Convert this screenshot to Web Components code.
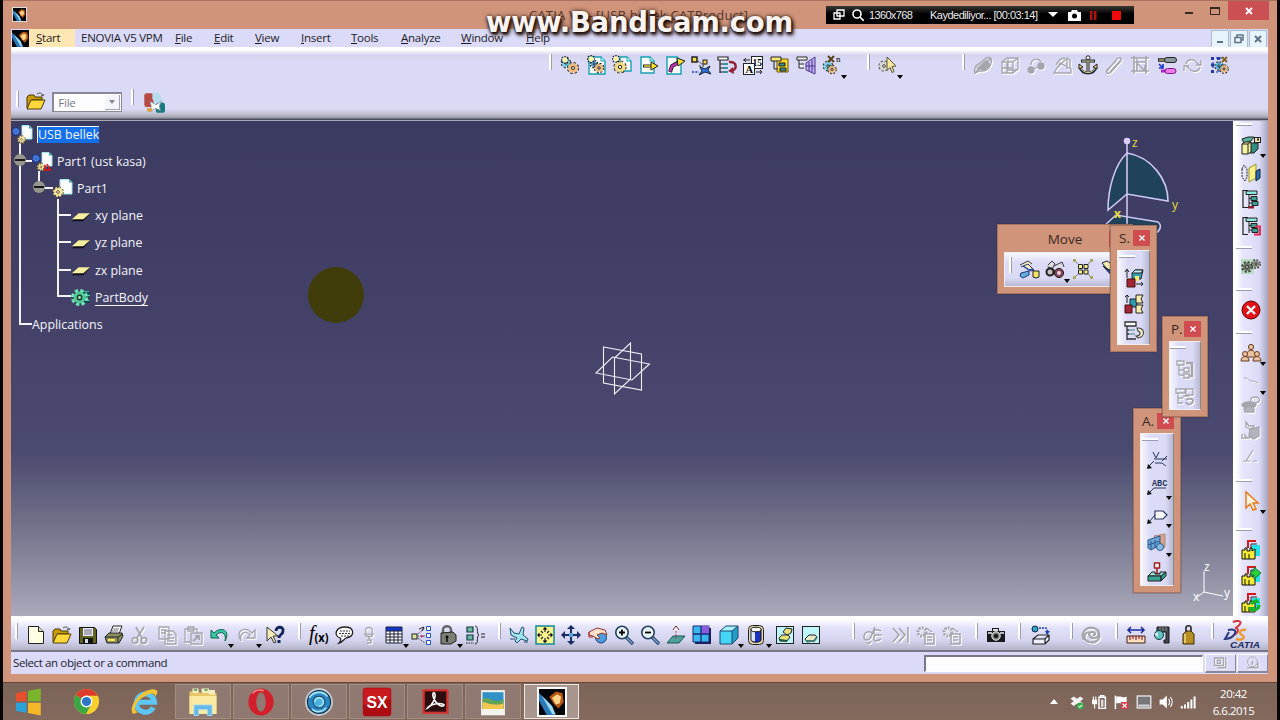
<!DOCTYPE html>
<html lang="en">
<head>
<meta charset="utf-8">
<title>CATIA V5</title>
<style>
  html, body {
    margin: 0;
    width: 1280px;
    height: 720px;
    overflow: hidden;
    background: #080604;
  }
  body {
    font: 11.5px/16px "Open Sans", "Noto Sans", sans-serif;
    color: #1c1c24;
  }
</style>
</head>
<body>
<cad-desktop></cad-desktop>

<script>
// ---------- icon artwork, all on a 20x20 grid ----------

const gear = (x, y, r, fill, line = '#2a2620') => `
  <g fill="none" stroke-dasharray="${r * 0.45} ${r * 0.335}">
    <circle cx="${x}" cy="${y}" r="${r}" stroke="${line}" stroke-width="3.600"/>
    <circle cx="${x}" cy="${y}" r="${r}" stroke="${fill}" stroke-width="1.800"/>
  </g>
  <circle cx="${x}" cy="${y}" r="${r - 0.2}" fill="${fill}"/>
  <circle cx="${x}" cy="${y}" r="${r * 0.35}" fill="#fff" stroke="${line}" stroke-width="1"/>`;
const spark = (x, y) => `<path d="M${x - 4} ${y}h8M${x} ${y - 4}v8M${x - 3} ${y - 3}l6 6M${x + 3} ${y - 3}l-6 6" stroke="#222" stroke-width="1.600" stroke-dasharray="1.200 1.200"/><circle cx="${x}" cy="${y}" r="2.400" fill="#fff6a0"/>`;
const page = (x, y, w, h) => `<path d="M${x} ${y}h${w - 4}l4 4v${h - 4}h${-w}z" fill="#fff" stroke="#14a0b0" stroke-width="1.4"/><path d="M${x + w - 4} ${y}v4h4" fill="#bff" stroke="#14a0b0"/>`;
const off = (inner) => `<g style="filter:drop-shadow(1px 1px 0 #fff)" fill="none" stroke="#a5a5ae" stroke-width="1.3">${inner}</g>`;
const treeIcon = `<path d="M7 1.500H2v17h5" stroke="#222" fill="none" stroke-width="1.200"/><path d="M5 2h11v3.500H5z" fill="#8fe4dc" stroke="#222"/><path d="M8 6v11M8 9.500h4M8 14h4" stroke="#222" fill="none"/><path d="M10 7.500h6v4h-6zM11 12.500h6v4h-6z" fill="#3b9f92" stroke="#222"/>`;
const lens = (sign) => `<path d="M12 12l7 7" stroke="#25406e" stroke-width="3.4"/><path d="M12 12l6.5 6.5" stroke="#7fa3cc" stroke-width="1.4"/><circle cx="8" cy="7.5" r="6.200" fill="#eefcff" stroke="#24405e" stroke-width="1.6"/><path d="${sign}" stroke="#000" stroke-width="1.8"/>`;
const folder = `<path d="M1 6l2-2h5l1 2h7v3H6L3 17H1z" fill="#c79a08" stroke="#4a3a05"/><path d="M1 18l4-9h14l-4 9z" fill="#ffd93c" stroke="#4a3a05"/><path d="M11 3c3-2 5-1 6 2l1-2m-1 2l-2-1" fill="none" stroke="#555"/>`;
const scene = (inner) => `<rect x="1.5" y="1.5" width="17" height="17" fill="#bff6fa" stroke="#222"/>${inner}`;
const blockTree = (arrow) => `<path d="M7 8V1h8" fill="none" stroke="#d81818" stroke-width="2"/><path d="M11 5h8v11h-8z" fill="#25dfe6"/><path d="M10 10V4h6" fill="none" stroke="#223" stroke-width="1"/><path d="M1 10h3V8h2v3h3V8h2v3l3-2v10H1z" fill="#f5ec35" stroke="#111"/><path d="M4 13v6M8 14v5" stroke="#111"/>${arrow}`;
const assy = `${gear(4, 6.500, 2.600, '#4d8bf0', '#0b2f9c')}<path d="M10 .5h7l3 3V14H10z" fill="#fff" stroke="#9be5e8"/><path d="M17 .5v3h3" fill="#35a9ad"/>`;

const ICONS = {
  space: `<rect width="20" height="20" fill="#05060c"/><path d="M0 3l9 9 3 8H6L0 9z" fill="#2b79b8"/><path d="M2 5l8 8 3 7-3-1-4-7z" fill="#9bdcf2"/><path d="M8 6l5-4 5 1 1 7-4 5-4-4z" fill="#b8590e"/><path d="M10 7l4-3 3 2-1 5-3 1z" fill="#ffd48a"/>`,
  gears: `${gear(6, 8, 3.500, '#6cd5ee')}${gear(13, 13, 4.300, '#f2bc7c')}${spark(5, 5)}`,
  product: `${page(3, 2, 16, 17)}${gear(8, 9, 2.600, '#50a8e0')}${gear(13, 13, 3.500, '#f2bc7c')}${spark(5, 4)}`,
  part: `${page(8, 2, 11, 14)}${gear(8, 12, 4.800, '#f6dc80')}${spark(4, 4)}`,
  insert: `${page(2, 2, 13, 16)}<path d="M4 11h9" stroke="#222" stroke-width="3"/><path d="M5 11h8" stroke="#f6e332" stroke-width="1.400"/><path d="M12 7l7 4-7 4z" fill="#f6e332" stroke="#222"/>`,
  insertPos: `${page(2, 2, 14, 17)}<path d="M5 17l2-6 7-4" stroke="#222" stroke-width="4" fill="none"/><path d="M5 16.500l2-5.500 6-3" stroke="#c22bb5" stroke-width="2.400" fill="none"/><path d="M12 3l8 3-7 5z" fill="#f6e332" stroke="#222"/>`,
  replace: `<rect x="1" y="2" width="5" height="5" fill="#f6dc50" stroke="#222" stroke-width="1.500"/><path d="M7 6l5 4m-4 1h5V7" stroke="#333" fill="none" stroke-dasharray="2 1"/><rect x="12" y="5" width="4" height="4" fill="#f3cd45" stroke="#222"/><path d="M9 12l5 2 5-3-2 4 3 4-6-2-6 3 3-4z" fill="#2f74dc" stroke="#123"/><path d="M1 17h7" stroke="#1838c0" stroke-width="1.600" stroke-dasharray="2 1.300"/>`,
  reorder: `<path d="M1 2h10v3H1zM3 5v13M3 9h4M3 13h4M3 17h4" fill="#fff" stroke="#222" stroke-width="1.200"/><path d="M6 8h5v2H6zM6 12h5v2H6zM6 16h5v2H6z" fill="#35979c"/><path d="M12 7c8-1 9 8 2 9" fill="none" stroke="#912434" stroke-width="2.500"/><path d="M16 12l-5 4 6 3z" fill="#912434"/>`,
  numbering: `<rect x="8.500" y="1.500" width="11" height="12" fill="#fff" stroke="#222"/><text x="9.500" y="11" font-size="9.500" font-weight="bold" font-family="Liberation Serif, serif">15</text><rect x=".5" y="8.500" width="11" height="11" fill="#fff" stroke="#222"/><text x="2.500" y="17.500" font-size="10.500" font-weight="bold" font-family="Liberation Serif, serif">A</text><path d="M0 5h7M3 3L1 5l2 2M13 17h6m-2-2l2 2-2 2" fill="none" stroke="#222"/>`,
  symmetry: `<path d="M7 4h11v13H7z" fill="#f8d828" stroke="#6c5610"/><path d="M1 2h10v4H1z" fill="#f6e97a" stroke="#222"/><path d="M4 6v8h4" stroke="#222" fill="none"/><path d="M9 8h6v3H9zM10 13h6v3h-6z" fill="#39918d" stroke="#222"/>`,
  load: `<path d="M1 2h10v3H1zM3 5v8h5M3 9h5" fill="#fff" stroke="#222"/><path d="M19 2v17l-9-4V8z" fill="#c4b2ee" stroke="#46328c"/><path d="M13 7v9M16 5v12M10 11h9" stroke="#46328c"/>`,
  multi: `${gear(6, 11, 3.500, '#6cd5ee')}${gear(10, 14.500, 3, '#f2bc7c')}<path d="M6 1l6 6M12 1l-6 6" stroke="#54441c" stroke-width="2"/><text x="14" y="7" font-size="9" font-family="Liberation Serif, serif">n</text>`,
  select: `${gear(6, 11, 3.800, '#d8d8d0', '#444')}<path d="M9 2l9 9-4 .5 2 5-2 1-2-5-3 3z" fill="#f6e6a0" stroke="#553"/>`,
  coincide: off('<path d="M2 18c-2-5 1-8 5-10l6-5c4-2 7 1 5 5-1 6-6 9-11 8z" fill="#d4d4de"/><path d="M5 13l8-7 4 4-6 5z" fill="#a5a5ae"/><path d="M1 19L18 3"/>'),
  contact: off('<path d="M2 7h11v11H2zM2 7l5-4h11v11l-5 4M13 7l5-4M8 4v11h10M7 8v10M2 13h11"/>'),
  offset: off('<circle cx="5" cy="15" r="3" fill="#a5a5ae"/><circle cx="15" cy="11" r="3" fill="#a5a5ae"/><path d="M5 10c0-6 7-8 10-3M5 15l10-4"/>'),
  angle: off('<path d="M2 18h17v-4L8 8zM5 13L15 3v11M15 3l3 2v9M4 10c2-4 5-7 9-7"/>'),
  anchor: `<path d="M10 5v13M3 6h14M2 12c1 4 4 6 8 6s7-2 8-6" fill="none" stroke="#1d2e48" stroke-width="3"/><path d="M10 6v11M4 6h12M3 13c1 3 4 4.500 7 4.500s6-1.500 7-4.500" fill="none" stroke="#e6d07a" stroke-width="1"/><circle cx="10" cy="2.800" r="2" fill="#fff" stroke="#222"/><path d="M1 14V9l4 3zM19 14V9l-4 3z" fill="#e6d07a" stroke="#222"/>`,
  clip: off('<path d="M3 16L13 4c3-3 6 0 3 3L7 17c-3 3-6 0-4-2L12 6M6 17L17 5"/>'),
  quick: off('<path d="M1 3h18M4 1v18M16 1v18M1 16h18M5 7h10M7 4v12M7 8l8 8M15 10v6h-5" stroke-width="1.600"/>'),
  flexible: `<path d="M1 5h7" stroke="#222" stroke-width="3.500"/><path d="M2 5h6" stroke="#d8c880" stroke-width="1.200"/><rect x="7.500" y="2.500" width="12" height="5" rx="2.500" fill="#8a9aa0" stroke="#222"/><path d="M2 9l4 4m0-4v4H2" stroke="#1830d0" stroke-width="1.600" fill="none"/><path d="M4 16h5" stroke="#b224c8" stroke-width="3"/><rect x="8" y="13.500" width="11" height="5" rx="2.500" fill="#ee7ae8" stroke="#7a1690"/>`,
  change: off('<path d="M3 9c1-5 8-6 11-1l3 2M17 12c-1 5-8 6-11 1l-3-2M18 5v5h-5M1 16v-5h5"/>'),
  pattern: `<path d="M3 3h10M3 10h8M3 17h8M4 3v14M10 3v14" stroke="#1730a0" stroke-dasharray="2 2"/><path d="M2 2h3v3H2zM8 2h3v3H8zM2 8.500h3v3H2zM2 15h3v3H2z" fill="#2038a8"/>${gear(10, 11, 3, '#49b8ea')}${gear(15, 14, 3, '#f4c48c')}<path d="M13 2l5 5M18 2l-5 5" stroke="#816626" stroke-width="2"/>`,
  folder,
  mailObj: `<rect x="2" y="2" width="8" height="12" rx="2" fill="#b64a42"/><rect x="12" y="10" width="8" height="9" rx="2.500" fill="#187a80"/><path d="M9 1l6 1 3 7-6 2-3-4z" fill="#b4dcec"/><path d="M7 9l5 3 5-3-2 4 1 4-4-2-5 3 1-5z" fill="#fff" stroke="#8890a0" stroke-width=".7"/><path d="M4 15h5l-1 3H5z" fill="#d9a23a"/>`,
  newDoc: `<path d="M2.500 1.500h10l5 5v12h-15z" fill="#ffffe4" stroke="#222"/><path d="M12.500 1.500v5h5" fill="#dcdcb8" stroke="#222"/>`,
  save: `<path d="M1.500 2.500h15l2 2v14h-17z" fill="#606420" stroke="#111"/><path d="M5 3h10v8H5z" fill="#eef"/><path d="M6 5h8M6 7h8M6 9h8" stroke="#667"/><path d="M5 13h10v5H5z" fill="#111"/><path d="M7 14h3v4H7z" fill="#ddd"/>`,
  print: `<path d="M6 9l3-8h9l-3 8z" fill="#fff" stroke="#222"/><path d="M9 4h6M8 6h6" stroke="#777"/><path d="M1 12l4-4h13l1 3-4 7H3z" fill="#8c8f60" stroke="#222"/><path d="M1 12h13l5-3M14 12v6" stroke="#222" fill="none"/><path d="M4 15h7" stroke="#ffe94d" stroke-width="2"/>`,
  cut: off('<path d="M6 2l6 11M14 2L7 13" stroke-width="1.800"/><circle cx="5" cy="15.500" r="2.800" stroke-width="1.800"/><circle cx="14" cy="15.500" r="2.800" stroke-width="1.800"/>'),
  copy: off('<path d="M2 2h10v12H2zM4 5h5M4 8h5M8 6h8l3 3v10H8zM10 10h5M10 13h7M10 16h7"/>'),
  paste: off('<path d="M2 4h12v13H2zM5 2h6v4H5z"/><path d="M8 8h11v11H8z" fill="#dad9f0"/><path d="M10 16l6-5m-4 0h4v4" stroke-width="1.800"/>'),
  undo: `<path d="M2 5v8h8L7 10c5-5 11-2 9 6 6-11-4-15-11-8z" fill="#36c9a5" stroke="#126048"/>`,
  redo: off('<path d="M18 5v8h-8l3-3C8 5 2 8 4 16-2 5 8 1 15 8z"/>'),
  whats: `<path d="M2 2v14l4-4 3 6 2-1-3-6h5z" fill="#f7ebb6" stroke="#333"/><path d="M11 6c0-5 8-5 7 0 0 4-4 3-4 7" fill="none" stroke="#12265c" stroke-width="2.800"/><rect x="12.500" y="15" width="3" height="3" fill="#12265c"/>`,
  formula: `<text x="1" y="15" font-size="20" font-style="italic" font-family="Liberation Serif, serif">f</text><text x="6.500" y="17" font-size="11.500" font-weight="bold" font-family="Open Sans, sans-serif" textLength="14" lengthAdjust="spacingAndGlyphs">(x)</text>`,
  comment: `<path d="M5 13C-2 10 1 2 10 2s11 9 1 11c-2 1-3 4-7 5 2-2 2-4 1-5z" fill="#fff" stroke="#222" stroke-width="1.300"/><path d="M5 6h10M4 8.500h11M6 11h8" stroke="#333" stroke-dasharray="2 1"/>`,
  knowledge: off('<circle cx="10" cy="6" r="3.500"/><path d="M6 8c0 5 8 5 8 0M10 12v2M8 15h4v3H8" stroke-width="1.600"/>'),
  table: `<path d="M2 2h16v16H2z" fill="#fff"/><path d="M2 2h16v4H2z" fill="#1236c8"/><path d="M2 2h16v16H2zM2 6h16M2 9h16M2 12h16M2 15h16M6 6v12M10 6v12M14 6v12" fill="none" stroke="#182038"/>`,
  links: `<rect x="0" y="9" width="5" height="5" fill="#dce59c" stroke="#222"/><path d="M5 11h8M6 9l7-6M6 13l7 5" stroke="#555" stroke-dasharray="2 1"/><path d="M7 4l5-2-2 4" fill="none" stroke="#222"/><path d="M14.500 1.500h4v4h-4zM14.500 8.500h4v4h-4zM14.500 15.500h4v4h-4z" fill="#fff" stroke="#1f55bd"/><path d="M9 10l3 1-3 2" fill="#d2257b"/>`,
  lock: `<path d="M5 9V5c0-5 8-5 8 0v4" fill="none" stroke="#666" stroke-width="2.600"/><path d="M3 8l12-1 3 3v6l-5 3H3z" fill="#7c8074" stroke="#222"/><circle cx="9" cy="12" r="1.500"/><path d="M9 12v5" stroke="#111" stroke-width="1.600"/>`,
  equiv: `<path d="M2 2h6v5H2zM2 10h6v5H2z" fill="#62bf9e" stroke="#234" stroke-width="1.200"/><path d="M1 18h8" stroke="#222" stroke-dasharray="1.500 1"/><path d="M10 1c4 0 1 8 4 9-3 1 0 9-4 9M16 9h4M16 12h4" fill="none" stroke="#222"/>`,
  fly: `<path d="M1 3l4 5 5 1 3-7 2 1-1 7 5 4-1 2-6-2-4 4-2-2 2-3-6-3z" fill="#9fe4f0" stroke="#22506e"/><path d="M1 14h5M15 17h4" stroke="#22506e"/>`,
  fit: `<rect x="1" y="1" width="18" height="18" fill="#faf58d" stroke="#1d8f98" stroke-width="1.600"/><path d="M6 6l2 2M14 6l-2 2M6 14l2-2M14 14l-2-2M10 4v3M10 13v3M4 10h3M13 10h3" stroke="#222" stroke-width="1.200"/><path d="M10 2l2.500 2.500h-5zM10 18l2.500-2.500h-5zM2 10l2.500-2.500v5zM18 10l-2.500-2.500v5z"/>`,
  pan: `<path d="M10 3v14M3 10h14" stroke="#1b2d66" stroke-width="2"/><path d="M10 0l4 4H6zM10 20l4-4H6zM0 10l4-4v8zM20 10l-4-4v8z" fill="#1b2d66"/><rect x="8" y="8" width="4" height="4" fill="#59a4dd"/>`,
  rotate: `<circle cx="13" cy="12.500" r="5.500" fill="#4d9ee0" stroke="#223e72"/><path d="M1 7l8-4 8 2 2 5-5-2-5 2 3 3-2 1-5-3-4-1z" fill="#ffe0cc" stroke="#84382e"/><path d="M1 7v5h4" stroke="#a22" fill="none"/>`,
  zoomIn: lens('M5 7.500h6M8 4.500v6'),
  zoomOut: lens('M5 7.500h6'),
  normal: `<path d="M1 18l6-7h12l-6 7z" fill="#4ca29c" stroke="#1c5450"/><path d="M10 14V4" stroke="#b04040" stroke-dasharray="2 1"/><path d="M7 5l3-4 3 4" fill="#fff" stroke="#622"/>`,
  views: `<path d="M3 3h16v16H3z" fill="#17205c"/><path d="M1 1h16v16H1z" fill="#39b8ee" stroke="#1a2878"/><path d="M9 1h8v8H9z" fill="#8b5ce0"/><path d="M9 1v16M1 9h16" stroke="#1a2878" stroke-width="1.300"/>`,
  cube: `<path d="M1 6l6-5h12l-6 5z" fill="#a8f1fa"/><path d="M1 6h12v13H1z" fill="#46d5f5"/><path d="M13 6l6-5v12l-6 6z" fill="#249cc8"/><path d="M1 6l6-5h12v12l-6 6H1zM1 6h12v13M13 6l6-5" fill="none" stroke="#1b4870"/>`,
  cyl: `<rect x="1.500" y=".5" width="15" height="19" rx="4" fill="#e2d9b0" stroke="#222"/><path d="M4 4v11c0 3 10 3 10 0V4z" fill="#1c32c0" stroke="#111"/><path d="M4.500 6h3.500v10.500l-3.500-1z" fill="#dce6ff"/><ellipse cx="9" cy="4.500" rx="5" ry="2.300" fill="#fff" stroke="#111"/>`,
  hide: scene('<path d="M4 13l3-3h6l2 2-3 4H5zM8 7l3-4 6 1-1 4-4 2z" fill="#e9e27a" stroke="#223"/><path d="M5 15l7 1" stroke="#253" stroke-width="2"/>'),
  swap: scene('<path d="M4 14l4-4h6l2 2-3 4-7 1z" fill="#e6eac8" stroke="#223"/><path d="M5 16h8l3-4" stroke="#4a7a70" fill="none" stroke-width="2"/>'),
  link1: off('<path d="M9 8c-4-3-8 0-8 4s5 4 7 0L12 2M8 16c-1 3-3 3-4 1M18 6c-6-3-9 0-6 4h7M18 14c-6 4-9 1-6-4" stroke-width="1.600"/>'),
  skip: off('<path d="M3 3l6 7-6 7M9 3l6 7-6 7M18 2v16" stroke-width="1.600"/>'),
  gearDoc: off('<circle cx="6" cy="7" r="4" stroke-width="3" stroke-dasharray="2 1"/><path d="M9 9h9v10H9zM11 12h5M11 15h5M10 3l6 4" stroke-width="1.500"/>'),
  camera: `<path d="M1 6h5V3h7v3h6v11H1z" fill="#181a20"/><path d="M7 4h5v2H7z" fill="#ddd"/><path d="M2 8h4M14 8h4" stroke="#b6bdc2" stroke-width="2"/><circle cx="10" cy="11" r="4.200" fill="#777" stroke="#fff"/><circle cx="10" cy="11" r="2" fill="#111"/>`,
  turn: `<circle cx="4" cy="4" r="3" fill="#2aa6c8" stroke="#124"/><path d="M8 3h7l2 4" fill="none" stroke="#1c3cb0" stroke-dasharray="2 1" stroke-width="1.400"/><path d="M14 6h5l-3 4z" fill="#1c3cb0"/><path d="M2 14l5-4h11v5l-4 4H2zM2 14h12l4-4M14 14v5" fill="#eef" stroke="#222" stroke-width="1.200"/>`,
  swirl: off('<path d="M3 15C-1 8 5 1 13 3c6 2 6 9 1 10-6 1-8-6-3-6s3 4 1 3M17 5c4 8-1 14-9 12-6-2-6-9 0-10" stroke-width="2.200"/>'),
  measure: `<path d="M2 5h16M5 2L2 5l3 3M15 2l3 3-3 3" fill="none" stroke="#1c2a9c" stroke-width="1.600"/><path d="M1 11h18v7H1z" fill="#fae0be" stroke="#3c1c14"/><path d="M4 11v4M7 11v3M10 11v4M13 11v3M16 11v4" stroke="#802"/>`,
  caliper: `<path d="M5 2h12v16h-5v-3h2V7H5z" fill="#444a50" stroke="#15171a"/><path d="M8 2v4M11 2v4M14 2v4" stroke="#888"/><circle cx="7" cy="10" r="4.500" fill="#61c4bc" stroke="#134"/><path d="M2 9l4-2v5z" fill="#def"/>`,
  weight: `<path d="M8 7V3c0-3 5-3 5 0v4" fill="none" stroke="#222" stroke-width="1.600"/><path d="M5 9l4-3h4l3 3v10H5z" fill="#b58f22" stroke="#3a2a04"/><path d="M7 9v9" stroke="#f2dc7c" stroke-width="1.500"/>`,
  scan: `<path d="M1 4l6-2h6l-3 4-7 2z" fill="#5bb39c" stroke="#222"/><rect x="13.500" y="2.500" width="6" height="5" fill="#f4e9b4" stroke="#222"/><path d="M16 4.500h2" stroke="#222" stroke-width="2"/><path d="M9 8h8v6l-4 4H9z" fill="#2f8d82" stroke="#222"/><path d="M1 9l3-2h6v10l-3 2H1z" fill="#f6f19c" stroke="#222"/><path d="M1 9h6v10M7 9l3-2" fill="none" stroke="#222"/>`,
  plane: `<path d="M1 6l2-4 3 4v8l-2 4-3-4z" fill="none" stroke="#222" stroke-dasharray="2 1"/><path d="M8 5l7-4v14l-7 4z" fill="#f8f08c" stroke="#9a942a"/><path d="M15 8l4-2v9l-4 3z" fill="#2b6cb4" stroke="#123"/>`,
  tree1: `${treeIcon}<path d="M7 17h6v2.500H7z" fill="#8c2030"/>`,
  tree2: `${treeIcon}<path d="M14 10.500h5v8h-6" fill="none" stroke="#e8204c" stroke-width="1.800"/>`,
  cogs: `<rect x="0" y="3" width="13" height="15" fill="#b7dcc2"/>${gear(6, 11, 4, '#66736a')}${gear(15, 8, 3, '#8a9188')}`,
  stop: `<circle cx="10" cy="10" r="9" fill="#e01218" stroke="#600"/><path d="M6 6l8 8M14 6l-8 8" stroke="#fff" stroke-width="2.400"/>`,
  people: `<g fill="#eac4a0" stroke="#6a3a1e"><path d="M5 14c0-9 10-9 10 0z"/><circle cx="10" cy="4" r="2.600"/><path d="M0 18c0-6 8-6 8 0zM12 18c0-6 8-6 8 0z"/><circle cx="4" cy="11" r="2.500"/><circle cx="16" cy="11" r="2.500"/></g>`,
  curve: off('<path d="M3 7c5-1 4 4 10 3l4 2" stroke-width="1"/>'),
  gray1: off('<ellipse cx="8" cy="10" rx="7" ry="3" fill="#a5a5ae"/><ellipse cx="14" cy="5" rx="4.500" ry="3"/><path d="M3 14l5-3 5 3v3H4z" fill="#b4b4be"/>'),
  gray2: off('<path d="M9 8l9-2v9l-5 3-5-3z" fill="#b4b4be"/><path d="M5 1l3 4h5l-3 4-5-3zM1 18v-5M1 17h7l3-3M3 13l3 4"/>'),
  gray3: off('<path d="M5 15L12 4M2 15h7M12 15h4" stroke-width="1.200"/>'),
  arrow: `<path d="M5 1v16l4-4 3 6 3-1-3-6h5z" fill="#fff6de" stroke="#e87a20" stroke-width="1.500"/>`,
  export1: blockTree(''),
  export2: blockTree('<path d="M10 5h3V1l7 6-7 6V9h-3z" fill="#30cf36" stroke="#084"/>'),
  export3: blockTree('<g fill="none" stroke="#14b42a" stroke-width="3"><path d="M10 11a5 5 0 0 1 7-2M18 12a5 5 0 0 1-8 4"/></g><path d="M15 5l4 5h-6zM8 14h6l-5 5z" fill="#14b42a"/>'),
  manip: `<path d="M1 6l8-4 4 3M2 8l7-3 6 6-3 1-5-3" fill="#f6f0c4" stroke="#334"/><path d="M4 7l6 4 4-1" fill="none" stroke="#2446b0" stroke-width="1.500"/><path d="M2 14l8-2v4l-6 3-3-2z" fill="#69aede" stroke="#13397c"/><path d="M14 12h6v6l-3 1-3-1z" fill="#f3e562" stroke="#222"/>`,
  snap: `<path d="M3 6l4-4 3 3-3 5M9 7l8-4 2 5" fill="#ddd" stroke="#334"/><path d="M2 7l6 2 5 5-5 2z" fill="#555"/><circle cx="5" cy="13" r="3.500" fill="#c8c0c8" stroke="#222" stroke-width="2"/><circle cx="14" cy="14" r="4.600" fill="#804358" stroke="#221"/><circle cx="14" cy="14" r="2" fill="#ecd3db"/>`,
  explode: `<path d="M1 1l5 5M19 1l-5 5M1 19l5-5M19 19l-5-5" stroke="#555" stroke-dasharray="2 1"/><path d="M5.500 5.500h4v4h-4zM11 5.500h4v4h-4zM5.500 11h4v4h-4zM11 11h4v4h-4z" fill="#f6f18a" stroke="#222"/><path d="M0 0h3v3H0zM17 0h3v3h-3zM0 17h3v3H0zM17 17h3v3h-3z" fill="#a8a860"/>`,
  clash: `<path d="M2 4l5-2 12 8-4 3-8-3z" fill="#f2ecae" stroke="#223"/><path d="M3 7l9 6 6-2v6l-5 1z" fill="#2c65b8" stroke="#112"/>`,
  sc1: `<path d="M3 10V2M1 4l2-3 2 3M12 16h7m-2-2l2 2-2 2" stroke="#222" fill="none"/><path d="M8 5l3-3h8l-2 9H8z" fill="#34a0b4" stroke="#222"/><path d="M8 5l3-3h8l-2 3z" fill="#c8f2f4" stroke="#222"/><path d="M11 8h4v5h-4z" fill="#f8e76a"/><path d="M3 11h8v8H3z" fill="#a32736" stroke="#411"/>`,
  sc2: `<path d="M3 9V1M1 3l2-2 2 2" stroke="#222" fill="none"/><path d="M6 5h7v8H6z" fill="#2c9db0" stroke="#222"/><path d="M1 11h7v8H1z" fill="#a32736" stroke="#411"/><path d="M12 1h7l-2 4 2 4h-7zM12 11h7l-2 4 2 4h-7z" fill="#f6edae" stroke="#222"/>`,
  sc3: `<path d="M1 1h11v4H1zM3 5v14M3 9h7M3 13h7M3 18h9" fill="#fff" stroke="#333" stroke-width="1.300"/><path d="M5 8h6v2H5zM5 12h6v2H5z" fill="#8faeb2"/><path d="M13 7c8-1 9 9 1 10l-2-2c5 0 5-4 2-5z" fill="#f2ecc8" stroke="#444" stroke-width="1.100"/>`,
  pub1: off('<path d="M2 2h7v4H2zM4 6v10M4 11h5M4 16h5M9 9h5v4H9zM9 15h5v4H9z"/><path d="M11 4h6v13h-3" stroke-width="2.500"/>'),
  pub2: off('<path d="M1 3h9v4H1zM3 7v10h5M3 12h5M11 3h7v6h-7zM8 10h6"/><path d="M11 14c5-3 9 0 6 3s-5 1-6-1" stroke-width="2"/>'),
  weld: `<path d="M6 1l3 6 3-6M7 8h13M8 12h7l4 3M15 10l5-5M7 10l-5 5" stroke="#25345c" fill="none"/><path d="M0 18l1-5 4 4z" fill="#111"/>`,
  text: `<text x="5" y="9" font-size="8.500" font-weight="bold" fill="#25345c" font-family="Liberation Mono, monospace">ABC</text><path d="M19 11H7l-5 5" stroke="#25345c" fill="none"/><path d="M0 18l1-5 4 4z" fill="#111"/>`,
  flag: `<path d="M8 6h8l4 4-4 4H8z" fill="#fff" stroke="#25345c" stroke-width="1.200"/><path d="M8 10l-6 7" stroke="#25345c"/><path d="M0 19l1-5 4 4z" fill="#111"/>`,
  view3d: `<path d="M7 3l11-2v13l-5 3z" fill="#dca18b" stroke="#a08878"/><path d="M1 7l12-4v9l-9 5-3-2z" fill="#6ea3d6" stroke="#275a90"/><path d="M4 8v9M8 7v8M1 12l12-4" stroke="#275a90"/><circle cx="13" cy="14" r="3.500" fill="#8abbe2" stroke="#275a90"/>`,
  stamp: `<path d="M7.500 1h5v5h-5z" fill="#fff" stroke="#a02020" stroke-width="1.500"/><path d="M10 6v6M7 12h6" stroke="#a02020" stroke-width="1.600"/><path d="M1 14l4-4h3v2h5v-2h6l-5 4z" fill="#9be2d4" stroke="#222"/><path d="M1 14h13v5H1zM14 14l5-4v4l-5 5z" fill="#36a296" stroke="#222"/>`,
  // specification tree
  root: `${assy}${gear(9.500, 14.500, 2.600, '#f8e9a4', '#8a7434')}`,
  instance: `${assy}${gear(9, 15, 2.600, '#f8e9a4', '#8a7434')}<path d="M13 13v5h6M15 12l3 6" stroke="#e31414" stroke-width="1.600" fill="none"/>`,
  partDoc: `<path d="M8 .5h9l3 3V15H8z" fill="#fff" stroke="#9be5e8"/><path d="M17 .5v3h3" fill="#35a9ad"/>${gear(6, 13, 4, '#f8e9a4', '#6d5d24')}`,
  datum: `<path d="M1 15L8 7h12l-7 8z" fill="#10101c"/><path d="M1 13l7-6.500h12L13 13z" fill="#f7efa0"/>`,
  body: `<path d="M13 5h7M14 9h6M13 14h6" stroke="#0c3d44" stroke-width="3"/><path d="M13 4h6M14 8h6M13 13h6" stroke="#4ad0c0" stroke-width="1.200"/><circle cx="9" cy="10" r="6.500" fill="#1f8264" stroke="#6fe3b4" stroke-width="5" stroke-dasharray="3 2.100"/><circle cx="9" cy="10" r="6" fill="#54c795"/><circle cx="9" cy="10" r="2.300" fill="#a8e8b0" stroke="#133c36" stroke-width="1.500"/>`,
  // taskbar and tray
  windows: `<path d="M2 4l7-1.200V9.500H2z" fill="#e4512a"/><path d="M10 2.600L18.500 1v8.500H10z" fill="#7bb52c"/><path d="M2 10.500h7v6.700L2 16z" fill="#2aa3d8"/><path d="M10 10.500h8.500V19L10 17.400z" fill="#f4b728"/>`,
  chrome: `<circle cx="10" cy="10" r="9.300" fill="#f8cf2c"/><path d="M10 10L2 5.200a9.300 9.300 0 0 1 16.300.6L10 5.800z" fill="#df3b2c"/><path d="M10 10L2 5.200A9.300 9.300 0 0 0 9.600 19.300l4-7z" fill="#3ca545"/><circle cx="10" cy="10" r="4.400" fill="#fff"/><circle cx="10" cy="10" r="3.400" fill="#2f76c8"/>`,
  ie: `<path d="M16 14A6.500 6.500 0 1 1 16.800 10.200H5" fill="none" stroke="#5cc6f4" stroke-width="3.600"/><path d="M1 18C-2 10 12-2 18 1.500c2 1.200 0 4-1 5C18 1 8 5 4 11c-2 3-1 6 1 6-1 1-3 2-4 1z" fill="#f2c332"/>`,
  explorer: `<path d="M1 3h6l1 1h11v14H1z" fill="#e9c766"/><path d="M3 1h4v3H3zM9 1h5v3H9zM14 2h4v3h-4z" fill="#f5edc2"/><path d="M4 2h2M11 2h2" stroke="#3a9a3a"/><path d="M1 6h18v12H1z" fill="#fae9a0"/><path d="M4 19v-7h12v7h-3v-4H7v4z" fill="#69b7e6" stroke="#9cdcf6" stroke-width=".6"/>`,
  opera: `<ellipse cx="10" cy="10" rx="9" ry="9.700" fill="#d21f2b"/><ellipse cx="10" cy="10" rx="3.400" ry="7" fill="#907970"/><path d="M4 4c2-3 6-3 8-2" stroke="#f58a8a" fill="none"/>`,
  orb: `<circle cx="10" cy="10" r="9.300" fill="#12263a" stroke="#c3ccd2" stroke-width="1.300"/><circle cx="10" cy="10" r="6.200" fill="none" stroke="#2a86c2" stroke-width="3.400"/><circle cx="10" cy="10" r="4" fill="#4cb4dc"/><path d="M7 10a3 3 0 1 1 3 3" fill="none" stroke="#b6ecfa"/><path d="M3 7c3-5 10-5 13-1M5 15c3 3 8 2 10-1" fill="none" stroke="#a7e6f8" stroke-width="1.200"/>`,
  sx: `<rect x=".5" y=".5" width="19" height="19" rx="2" fill="#ad0c12"/><path d="M1 1h18v7L1 12z" fill="#c91a20"/><text x="10" y="14" text-anchor="middle" font-size="10.500" font-weight="bold" fill="#fff" font-family="Liberation Sans, sans-serif">SX</text>`,
  acrobat: `<rect x="1" y="1.500" width="18" height="17" fill="#d3322e"/><rect x="2.600" y="3" width="14.800" height="14" fill="#2c0e10"/><path d="M4.500 14.500c3-1.500 6-7 5-10-.6-1.500-2 0-1 2.500 1.500 4 4.500 7 7 6 1.500-1-2-2-5-1.500s-5 1.500-6 3z" fill="none" stroke="#fff" stroke-width="1.100"/>`,
  photo: `<path d="M1.500 1.500h17v18h-17z" fill="#f4f4ee"/><path d="M2.500 3h15v12h-15z" fill="#2f91c6"/><path d="M2.500 8c5-3 7 4 15 0v7h-15z" fill="#64a356"/><path d="M2.500 10c5 1 8 3 15 1v4h-15z" fill="#f2c64f"/>`,
  dropbox: `<path d="M6 3l4 3 4-3 4 3-4 3 4 3-4 3-4-3-4 3-4-3 4-3-4-3z" fill="#f5f5f5"/><circle cx="14" cy="15" r="4.500" fill="#35a947"/><path d="M12 15l1.500 1.500 3-3" stroke="#fff" fill="none" stroke-width="1.300"/>`,
  battery: `<path d="M10 4h8v14h-8zM12 2h4v2h-4z" fill="none" stroke="#fff" stroke-width="1.800"/><path d="M12.500 7h3v9h-3z" fill="#ddd"/><path d="M3 3v5M6 3v5M2 8h5v4H2zM4.500 12v6" stroke="#fff" stroke-width="1.400" fill="#fff"/>`,
  action: `<path d="M3 2v17" stroke="#fff" stroke-width="1.800"/><path d="M4 3h6c2 2 5 1 7 0v9h-7c-2-1-4-1-6 0z" fill="#fff"/><path d="M10 10h9v9h-9z" fill="#d33f4c"/><path d="M12 12l5 5M17 12l-5 5" stroke="#fff" stroke-width="1.600"/>`,
  pane: `<rect x="1.500" y="2.500" width="17" height="15" fill="#77777a" stroke="#eee" stroke-width="1.600"/><path d="M3 13h14v3H3z" fill="#ccc"/>`,
  sound: `<path d="M2 7h4l5-5v16l-5-5H2z" fill="#fff"/><path d="M13 6c2 2 2 6 0 8M15.500 4c3 3 3 9 0 12" stroke="#fff" fill="none" stroke-width="1.300"/>`,
  signal: `<path d="M1 15h2.500v3H1zM5 13h2.500v5H5zM9 10h2.500v8H9zM13 7h2.500v11H13zM17 3h2.500v15H17z" fill="#fff"/>`,
  screen: off('<path d="M2 4h12v10H2zM6 7h4v4H6zM17 3v14H6" stroke-width="1.800"/>'),
  info: off('<circle cx="10" cy="9" r="6.500"/><path d="M10 8v5M10 5v1M3 17h14V9" stroke-width="2"/>'),
};

const define = (tag, html, setup) => {
  const template = document.createElement('template');
  template.innerHTML = html;
  customElements.define(tag, class extends HTMLElement {
    constructor() {
      super();
      this.attachShadow({ mode: 'open' }).appendChild(template.content.cloneNode(true));
    }

    connectedCallback() {
      if (setup) setup(this, this.shadowRoot);
    }
  });
};

// square icon, size in pixels from the size attribute
define('cad-icon', `
  <style>
    :host { display: block; flex: none; }
    svg { display: block; width: 100%; height: 100%; overflow: visible; }
  </style>
  <svg viewBox="0 0 20 20"></svg>`,
(host, root) => {
  const size = host.getAttribute('size') || 20;
  host.style.width = host.style.height = `${size}px`;
  root.querySelector('svg').innerHTML = ICONS[host.getAttribute('name')] || '';
});

// one toolbar slot, with a small triangle when it opens a flyout
define('cad-tool', `
  <style>
    :host {
      display: flex;
      flex: none;
      align-items: center;
      justify-content: center;
      position: relative;
      width: 26.2px;
      height: 26.4px;
    }
    :host([drop])::after {
      content: "";
      position: absolute;
      right: -2px;
      bottom: 0;
      border: 3px solid transparent;
      border-top: 4px solid #000;
      border-bottom: 0;
    }
  </style>
  <cad-icon></cad-icon>`,
(host, root) => {
  const icon = root.querySelector('cad-icon');
  icon.setAttribute('name', host.getAttribute('icon'));
  icon.setAttribute('size', 20);
  icon.connectedCallback();
});

define('cad-grip', `
  <style>
    :host {
      display: block;
      flex: none;
      box-sizing: border-box;
      width: 3px;
      height: 16px;
      margin: 0 5px 8px 9.5px;
      background: #fff;
      border-right: 1px solid #9c9cae;
    }
    :host([flat]) {
      width: 16px;
      height: 3px;
      margin: 7px 14px 6.3px 0;
      border-right: 0;
      border-bottom: 1px solid #9c9cae;
    }
  </style>`);

define('cad-menu', `
  <style>
    :host { display: flex; height: 18px; background: #dbdaf8; line-height: 18px; letter-spacing: -.25px; }
    cad-icon { margin: 1px 0 0 1px; }
    ::slotted(span) { box-sizing: border-box; white-space: nowrap; }
    ::slotted(.open) { background: #ffe6b2; }
    .mdi { display: flex; gap: 1px; margin-left: auto; padding: 1px 1px 0 0; }
    .mdi svg { width: 16px; height: 16px; background: #e8f4fd; border: 1px solid #a9bdd2; box-sizing: content-box; }
  </style>
  <cad-icon name="space" size="17"></cad-icon>
  <slot></slot>
  <div class="mdi">
    <svg viewBox="0 0 16 16"><path d="M5 11h6" stroke="#5d7288" stroke-width="2"/></svg>
    <svg viewBox="0 0 16 16"><path d="M6 6V4h6v5h-2M4 6.500h6v5H4z" stroke="#5d7288" stroke-width="1.500" fill="none"/></svg>
    <svg viewBox="0 0 16 16"><path d="M5 5l6 6M11 5l-6 6" stroke="#5d7288" stroke-width="2"/></svg>
  </div>`);

define('cad-recorder', `
  <style>
    :host {
      display: flex;
      flex: none;
      align-items: center;
      width: 308px;
      height: 18px;
      box-sizing: border-box;
      padding-left: 7px;
      background: linear-gradient(#3a3734, #000 45%);
      color: #eee;
      font: 11px/18px "Liberation Sans", sans-serif;
    }
    .size { flex: none; width: 61px; margin-left: 5px; letter-spacing: -.65px; }
    .state { flex: none; width: 123px; letter-spacing: -.5px; white-space: nowrap; }
    svg { flex: none; }
  </style>
  <svg width="12" height="12" viewBox="0 0 12 12" fill="none" stroke="#fff" stroke-width="1.300"><path d="M4 1h7v6H4zM1 4h6v6H1z"/></svg>
  <svg style="margin-left:7px" width="12" height="12" viewBox="0 0 12 12" fill="none" stroke="#fff" stroke-width="1.600"><circle cx="5" cy="5" r="4"/><path d="M8 8l4 4"/></svg>
  <span class="size">1360x768</span>
  <span class="state">Kaydediliyor... [00:03:14]</span>
  <svg width="80" height="14" viewBox="0 0 80 14" overflow="visible">
    <path d="M-5 4h10l-5 5z" fill="#fff"/>
    <path d="M15 4h3l1-2h5l1 2h3v9H15z" fill="#fff"/><circle cx="21.500" cy="8" r="2.500" fill="#000"/>
    <path d="M37 3h2.500v9H37zM41 3h2.500v9H41z" fill="#b01010"/>
    <rect x="59" y="3" width="9" height="9" fill="#ee0808"/>
  </svg>`);

define('cad-titlebar', `
  <style>
    :host { display: flex; position: relative; height: 29px; }
    cad-icon { margin: 6px 0 0 9px; border: 1px solid #ddd; box-sizing: border-box; }
    .title {
      position: absolute;
      left: 526px;
      top: 5px;
      font-size: 13px;
      line-height: 18px;
      letter-spacing: .2px;
      color: #54382e;
      white-space: nowrap;
    }
    .mark {
      position: absolute;
      left: 483px;
      top: 8px;
      font: bold 27.5px/26px "DejaVu Sans", sans-serif;
      letter-spacing: -.25px;
      color: #faf3f0;
      text-shadow: 1px 2px 3px #1a0c08, 0 0 4px #2a1812, 2px 3px 4px #33201a;
      white-space: nowrap;
      z-index: 2;
    }
    cad-recorder { margin: 5px 0 0 799px; }
    .min, .max { flex: none; margin-top: 11px; }
    .min { width: 8px; height: 2px; background: #352722; margin-left: 51px; }
    .max { width: 8px; height: 5px; margin: 6px 0 0 17px; border: 1px solid #352722; border-top-width: 2px; }
    .close { flex: none; width: 41px; height: 19px; margin-left: auto; margin-right: 4px; background: #ca5054; display: grid; place-items: center; }
  </style>
  <cad-icon name="space" size="15"></cad-icon>
  <span class="title">CATIA V5 - [USB bellek.CATProduct]</span>
  <span class="mark">www.Bandicam.com</span>
  <cad-recorder></cad-recorder>
  <i class="min"></i><i class="max"></i>
  <div class="close"><svg width="10" height="10"><path d="M2 2l6 6M8 2l-6 6" stroke="#fff" stroke-width="1.800"/></svg></div>`);

define('cad-topbars', `
  <style>
    :host {
      display: block;
      height: 74px;
      box-sizing: border-box;
      background: linear-gradient(#fff 0 3px, #d5d4ef 8px, #dbdaf6 14px 62px, #b9b9c8 68px, #9a9aa6 71px, #4a4c5e 72px 73px, #a6a6b4 73px);
    }
    .row { display: flex; align-items: center; height: 37px; }
    .combo {
      display: flex;
      box-sizing: border-box;
      width: 70px;
      height: 20px;
      padding-left: 4px;
      margin: 1px 0 0 3px;
      background: #fdfdff;
      border: 1px solid #888896;
      border-width: 2px 1px 1px 2px;
      color: #777784;
      line-height: 17px;
      letter-spacing: -.2px;
    }
    .combo i { width: 14px; margin: 1px 1px 1px auto; border: 1px solid #a0a0ae; border-width: 0 1px 1px 0; background: #f4f4fc; display: grid; place-items: center; }
  </style>
  <div class="row">
    <cad-grip style="margin-left:538px"></cad-grip>
    <cad-tool icon="gears"></cad-tool><cad-tool icon="product"></cad-tool><cad-tool icon="part"></cad-tool>
    <cad-tool icon="insert"></cad-tool><cad-tool icon="insertPos"></cad-tool><cad-tool icon="replace"></cad-tool>
    <cad-tool icon="reorder"></cad-tool><cad-tool icon="numbering"></cad-tool><cad-tool icon="symmetry"></cad-tool>
    <cad-tool icon="load"></cad-tool><cad-tool icon="multi" drop></cad-tool>
    <cad-grip style="margin-left:22px"></cad-grip>
    <cad-tool icon="select" drop></cad-tool>
    <cad-grip style="margin-left:61px"></cad-grip>
    <cad-tool icon="coincide"></cad-tool><cad-tool icon="contact"></cad-tool><cad-tool icon="offset"></cad-tool>
    <cad-tool icon="angle"></cad-tool><cad-tool icon="anchor"></cad-tool><cad-tool icon="clip"></cad-tool>
    <cad-tool icon="quick"></cad-tool><cad-tool icon="flexible"></cad-tool><cad-tool icon="change"></cad-tool>
    <cad-tool icon="pattern"></cad-tool>
  </div>
  <div class="row">
    <cad-grip style="margin:0 4px 8px 5px"></cad-grip>
    <cad-tool icon="folder" style="margin-top:-2px"></cad-tool>
    <div class="combo" style="margin-top:-1px">File<i><svg width="6" height="4"><path d="M0 0h6L3 4z" fill="#888"/></svg></i></div>
    <cad-grip style="margin:0 8px 12px 9px"></cad-grip>
    <cad-icon name="mailObj" size="23"></cad-icon>
  </div>`);

define('cad-tree', `
  <style>
    :host { display: block; position: relative; color: #f4f4fa; font-size: 12.4px; }
    .lines { position: absolute; left: 0; top: 0; }
    .node { display: flex; align-items: center; position: relative; height: 27.2px; }
    .node cad-icon { margin-right: 5px; }
    .picked { background: #1170ea; border: 1px solid #fff; border-width: 1px 0 0 1px; height: 16px; line-height: 16px; }
    .work { text-decoration: underline; text-underline-offset: 3px; }
  </style>
  <svg class="lines" width="80" height="220" fill="none" stroke="#f2f2f8" stroke-width="2">
    <path d="M9 22V203H21M9 40H21M28 50V66M28 67H42M47 78V175H60M47 94H60M47 121H60M47 149H60"/>
    <g stroke="none"><circle cx="9" cy="39" r="6" fill="#96968e"/><circle cx="28" cy="66" r="6" fill="#96968e"/></g>
    <path d="M4 39h10M23 66h10" stroke="#18181c"/>
  </svg>
  <div class="node" style="padding-left:1px"><cad-icon name="root"></cad-icon><span class="picked">USB bellek</span></div>
  <div class="node" style="padding-left:21px"><cad-icon name="instance"></cad-icon><span>Part1 (ust kasa)</span></div>
  <div class="node" style="padding-left:41px"><cad-icon name="partDoc"></cad-icon><span>Part1</span></div>
  <div class="node" style="padding-left:60px"><cad-icon name="datum" size="19"></cad-icon><span>xy plane</span></div>
  <div class="node" style="padding-left:60px"><cad-icon name="datum" size="19"></cad-icon><span>yz plane</span></div>
  <div class="node" style="padding-left:60px"><cad-icon name="datum" size="19"></cad-icon><span>zx plane</span></div>
  <div class="node" style="padding-left:60px"><cad-icon name="body" size="19"></cad-icon><span class="work">PartBody</span></div>
  <div class="node" style="padding-left:21px"><span>Applications</span></div>`);

// floating palette window
define('cad-palette', `
  <style>
    :host {
      display: flex;
      flex-direction: column;
      box-sizing: border-box;
      position: absolute;
      padding: 0 6px 6px;
      background: #cf947a;
      border: 1px solid #a5745f;
      box-shadow: 0 0 1px #30203a;
    }
    header { display: flex; align-items: center; justify-content: space-between; height: 29px; margin-right: -3px; padding-left: 2px; font-size: 13.5px; color: #3a2822; }
    header b { font-weight: normal; flex: 1; }
    header i { width: 17px; height: 16px; margin-right: 3px; background: #cf4c50; display: grid; place-items: center; }
    main {
      display: flex;
      flex-direction: column;
      align-items: center;
      flex: 1;
      background: linear-gradient(90deg, #f7f7ff, #dcdbf7 30% 75%, #b9b8d2);
      border: 1px solid #eee;
      border-right-color: #888;
    }
    :host([wide]) header { height: 27px; padding-left: 17px; }
    :host([wide]) b { text-align: center; }
    :host([wide]) main { flex-direction: row; background: linear-gradient(#f7f7ff, #dcdbf7 30% 75%, #b9b8d2); }
  </style>
  <header><b></b><i><svg width="8" height="8"><path d="M1.500 1.500l5 5M6.500 1.500l-5 5" stroke="#fff" stroke-width="1.400"/></svg></i></header>
  <main><slot></slot></main>`,
(host, root) => {
  root.querySelector('b').textContent = host.getAttribute('label');
});

define('cad-viewport', `
  <style>
    :host {
      display: block;
      position: relative;
      flex: 1;
      background: linear-gradient(#3b3a61, #434168 38%, #4b4a70 67%, #5a5a7a 73%, #84849a 88%, #abaabb);
    }
    .scene { position: absolute; left: 0; top: 0; }
    cad-palette > cad-grip[flat] { margin: 4px 14px 7px 0; }
  </style>
  <svg class="scene" width="1222" height="495" font-family="Open Sans, sans-serif">
    <circle cx="325" cy="174" r="28" fill="#403d0a"/>
    <g fill="none" stroke="#f0f0fa" stroke-width="1.100">
      <path d="M592.500 226L630.500 233V269L592.500 262z"/>
      <path d="M619.500 222V258L603.500 273V237z"/>
      <path d="M601.500 236L638.500 243L621 259L585 252z"/>
    </g>
    <g fill="#20435b" stroke="#cfc6f2" stroke-width="1.600">
      <path d="M1116 32C1141 36 1157 59 1157 80L1116 73L1097 89C1097 67 1104 43 1116 32z"/>
      <path d="M1092 106L1105 94L1147 101C1152 105 1148 111 1144 112z"/>
      <path d="M1116 22V106"/>
    </g>
    <circle cx="1116" cy="20" r="3.300" fill="#dacdf8"/>
    <g fill="#e4de3c" font-size="12">
      <text x="1121" y="26">z</text><text x="1161" y="88">y</text><text x="1103" y="97" font-weight="bold">x</text>
    </g>
    <path d="M1193 450V471L1212 475M1193 471L1186 476" fill="none" stroke="#fff"/>
    <g fill="#fff" font-size="12"><text x="1193" y="450">z</text><text x="1213" y="476">y</text><text x="1182" y="480">x</text></g>
  </svg>
  <cad-tree></cad-tree>
  <cad-palette label="Move" wide style="left:986px;top:103px;width:136px;height:70px">
    <cad-grip style="margin:0 4px 10px 4px"></cad-grip>
    <cad-tool icon="manip"></cad-tool><cad-tool icon="snap" drop></cad-tool>
    <cad-tool icon="explode" style="margin-left:2px"></cad-tool><cad-tool icon="clash"></cad-tool>
  </cad-palette>
  <cad-palette label="S." style="left:1099px;top:104px;width:47px;height:127px">
    <cad-grip flat></cad-grip>
    <cad-tool icon="sc1"></cad-tool><cad-tool icon="sc2"></cad-tool><cad-tool icon="sc3"></cad-tool>
  </cad-palette>
  <cad-palette label="A." style="left:1122px;top:287px;width:48px;height:185px">
    <cad-grip flat></cad-grip>
    <cad-tool icon="weld"></cad-tool><cad-tool icon="text" drop></cad-tool>
    <cad-tool icon="flag" drop style="margin-top:1.5px"></cad-tool><cad-tool icon="view3d" drop style="margin-top:2px"></cad-tool>
    <cad-tool icon="stamp" style="margin-top:2px"></cad-tool>
  </cad-palette>
  <cad-palette label="P." style="left:1151px;top:195px;width:46px;height:101px">
    <cad-grip flat></cad-grip>
    <cad-tool icon="pub1"></cad-tool><cad-tool icon="pub2"></cad-tool>
  </cad-palette>`);

define('cad-sidebar', `
  <style>
    :host {
      display: flex;
      flex-direction: column;
      align-items: center;
      width: 35px;
      box-sizing: border-box;
      padding-top: 1.5px;
      background: linear-gradient(90deg, #fff 3px, #e6e5fb 10px, #dcdbf7 26px, #a6a6c4);
    }
    cad-tool { margin-left: 1px; }
  </style>
  <cad-grip flat style="margin-top:0"></cad-grip>
  <cad-tool icon="scan" drop></cad-tool>
  <cad-tool icon="plane" style="margin-top:1.5px"></cad-tool>
  <cad-tool icon="tree1"></cad-tool><cad-tool icon="tree2"></cad-tool>
  <cad-grip flat style="margin-bottom:4.3px"></cad-grip>
  <cad-tool icon="cogs"></cad-tool>
  <cad-grip flat style="margin-top:8.3px"></cad-grip>
  <cad-tool icon="stop"></cad-tool>
  <cad-grip flat></cad-grip>
  <cad-tool icon="people" drop></cad-tool>
  <cad-tool icon="curve" drop style="margin-top:2px"></cad-tool>
  <cad-tool icon="gray1" style="margin-top:-2.4px"></cad-tool>
  <cad-tool icon="gray2" style="height:25px"></cad-tool><cad-tool icon="gray3" style="height:24px"></cad-tool>
  <cad-grip flat style="margin-top:11px"></cad-grip>
  <cad-tool icon="arrow" drop></cad-tool>
  <cad-grip flat style="margin-top:13.3px"></cad-grip>
  <cad-tool icon="export1"></cad-tool><cad-tool icon="export2"></cad-tool><cad-tool icon="export3"></cad-tool>`);

define('cad-bottombar', `
  <style>
    :host {
      display: flex;
      align-items: center;
      height: 36px;
      box-sizing: border-box;
      padding-top: 2px;
      background: linear-gradient(#fff 3px, #e2e1fa 12px, #d6d5f0 24px, #b4b4c8 34px, #77778a 34.5px);
    }
    .brand { flex: none; margin-left: 4px; }
  </style>
  <cad-grip style="margin-left:3.5px"></cad-grip>
  <cad-tool icon="newDoc"></cad-tool><cad-tool icon="folder"></cad-tool><cad-tool icon="save"></cad-tool>
  <cad-tool icon="print"></cad-tool><cad-tool icon="cut"></cad-tool><cad-tool icon="copy"></cad-tool>
  <cad-tool icon="paste"></cad-tool><cad-tool icon="undo" drop></cad-tool>
  <cad-tool icon="redo" drop style="margin-left:2px"></cad-tool><cad-tool icon="whats" style="margin-left:2px"></cad-tool>
  <cad-grip style="margin-right:4.5px"></cad-grip>
  <cad-tool icon="formula"></cad-tool><cad-tool icon="comment"></cad-tool>
  <cad-tool icon="knowledge" style="width:23px"></cad-tool><cad-tool icon="table" drop></cad-tool>
  <cad-tool icon="links" style="margin-left:1.5px"></cad-tool><cad-tool icon="lock" drop></cad-tool>
  <cad-tool icon="equiv" style="margin-left:1.5px"></cad-tool>
  <cad-grip style="margin-right:5px"></cad-grip>
  <cad-tool icon="fly"></cad-tool><cad-tool icon="fit"></cad-tool><cad-tool icon="pan"></cad-tool>
  <cad-tool icon="rotate"></cad-tool><cad-tool icon="zoomIn"></cad-tool><cad-tool icon="zoomOut"></cad-tool>
  <cad-tool icon="normal"></cad-tool><cad-tool icon="views"></cad-tool><cad-tool icon="cube" drop></cad-tool>
  <cad-tool icon="cyl" drop style="margin-left:2px"></cad-tool><cad-tool icon="hide" style="margin-left:2px"></cad-tool>
  <cad-tool icon="swap"></cad-tool>
  <cad-grip style="margin-left:28px"></cad-grip>
  <cad-tool icon="link1"></cad-tool><cad-tool icon="skip"></cad-tool><cad-tool icon="gearDoc"></cad-tool><cad-tool icon="gearDoc"></cad-tool>
  <cad-grip></cad-grip>
  <cad-tool icon="camera"></cad-tool>
  <cad-grip style="margin-right:7px"></cad-grip>
  <cad-tool icon="turn"></cad-tool>
  <cad-grip style="margin-left:15.5px"></cad-grip>
  <cad-tool icon="swirl"></cad-tool>
  <cad-grip style="margin-left:10.500px"></cad-grip>
  <cad-tool icon="measure"></cad-tool><cad-tool icon="caliper"></cad-tool><cad-tool icon="weight"></cad-tool>
  <cad-grip></cad-grip>
  <svg class="brand" width="40" height="30" viewBox="0 0 40 30" fill="none">
    <path d="M10 2c5-2 9-1 7 2-1 2-4 4-5 4 4 0 4 4-1 7" stroke="#d9323c" stroke-width="2"/>
    <path d="M5 10c8-2 9 2 5 6-3 3-6 3-8 3l4-7" stroke="#293a80" stroke-width="2"/>
    <path d="M23 10c-6-1-8 3-4 5s1 6-6 4" stroke="#e99a35" stroke-width="2.400"/>
    <text x="7" y="28" font-size="8.500" font-weight="bold" font-style="italic" fill="#222c66" textLength="30" lengthAdjust="spacingAndGlyphs" font-family="Liberation Sans, sans-serif">CATIA</text>
  </svg>`);

define('cad-status', `
  <style>
    :host { display: flex; align-items: center; height: 22px; background: #dbdaf8; padding-left: 2px; box-sizing: border-box; }
    span { flex: 1; color: #22222c; letter-spacing: -.38px; }
    .power { width: 279px; height: 17px; background: #fdfdff; border: 1px solid #fff; border-top: 2px solid #77778a; border-left: 2px solid #77778a; box-sizing: border-box; margin-right: 1px; }
    .key { box-sizing: border-box; width: 31px; height: 19px; margin-left: 1px; display: grid; place-items: center; border: 1px solid #fff; border-right-color: #888898; border-bottom: 2px solid #888898; }
  </style>
  <span>Select an object or a command</span>
  <div class="power"></div>
  <div class="key"><cad-icon name="screen" size="15"></cad-icon></div>
  <div class="key"><cad-icon name="info" size="15"></cad-icon></div>`);

define('cad-taskbar', `
  <style>
    :host {
      display: flex;
      height: 38px;
      box-sizing: border-box;
      padding: 1px 0 1px;
      background: linear-gradient(#7c6459, #84695d);
      border-top: 1px solid #5f493e;
      color: #fff;
    }
    .pin { width: 58px; display: grid; place-items: center; flex: none; }
    .task { width: 54px; margin-right: 2px; display: grid; place-items: center; flex: none; border: 1px solid #a38e84; background: #907970; }
    .task.on { border-color: #efe6e2; background: #a8958d; width: 53px; margin-left: 1px; }
    .on cad-icon { border: 2px solid #fff; }
    .tray { display: flex; align-items: center; gap: 6.2px; margin-left: auto; margin-right: 6px; }
    .clock { width: 63px; text-align: center; font-size: 11.5px; line-height: 17px; padding-top: 1px; letter-spacing: -.5px; margin-right: 12px; white-space: nowrap; }
  </style>
  <div class="pin" style="width:50px"><cad-icon name="windows" size="30"></cad-icon></div>
  <div class="pin" style="margin-left:4px"><cad-icon name="chrome" size="27"></cad-icon></div>
  <div class="pin" style="width:60px"><cad-icon name="ie" size="28"></cad-icon></div>
  <div class="task"><cad-icon name="explorer" size="30"></cad-icon></div>
  <div class="task"><cad-icon name="opera" size="28"></cad-icon></div>
  <div class="task"><cad-icon name="orb" size="28"></cad-icon></div>
  <div class="task"><cad-icon name="sx" size="30"></cad-icon></div>
  <div class="task"><cad-icon name="acrobat" size="29"></cad-icon></div>
  <div class="task"><cad-icon name="photo" size="28"></cad-icon></div>
  <div class="task on"><cad-icon name="space" size="26"></cad-icon></div>
  <div class="tray">
    <svg width="8" height="5" style="margin-right:5px"><path d="M0 5h8L4 0z" fill="#fff"/></svg>
    <cad-icon name="dropbox" size="16"></cad-icon><cad-icon name="battery" size="16"></cad-icon>
    <cad-icon name="action" size="16"></cad-icon><cad-icon name="pane" size="16"></cad-icon>
    <cad-icon name="sound" size="16"></cad-icon><cad-icon name="signal" size="16"></cad-icon>
  </div>
  <div class="clock">20:42<br>6.6.2015</div>`);

define('cad-desktop', `
  <style>
    :host { display: flex; flex-direction: column; box-sizing: border-box; height: 720px; padding: 0 3px; }
    .window {
      display: flex;
      flex-direction: column;
      height: 682px;
      box-sizing: border-box;
      padding: 0 9px 8px 8px;
      background: #cf947a;
      border-top: 1px solid #a8715c;
    }
    cad-titlebar { margin: 0 -5px 0 -8px; height: 28px; }
    .work { display: flex; flex: 1; min-height: 0; }
  </style>
  <div class="window">
    <cad-titlebar></cad-titlebar>
    <cad-menu>
      <span class="open" style="width:46px;padding-left:7px"><u>S</u>tart</span>
      <span style="width:100px;padding-left:6px">ENOVIA V5 VPM</span>
      <span style="width:39px"><u>F</u>ile</span>
      <span style="width:41px"><u>E</u>dit</span>
      <span style="width:46px"><u>V</u>iew</span>
      <span style="width:50px"><u>I</u>nsert</span>
      <span style="width:50px"><u>T</u>ools</span>
      <span style="width:60px"><u>A</u>nalyze</span>
      <span style="width:65px"><u>W</u>indow</span>
      <span><u>H</u>elp</span>
    </cad-menu>
    <cad-topbars></cad-topbars>
    <div class="work">
      <cad-viewport></cad-viewport>
      <cad-sidebar></cad-sidebar>
    </div>
    <cad-bottombar></cad-bottombar>
    <cad-status></cad-status>
  </div>
  <cad-taskbar></cad-taskbar>`);
</script>
</body>
</html>
